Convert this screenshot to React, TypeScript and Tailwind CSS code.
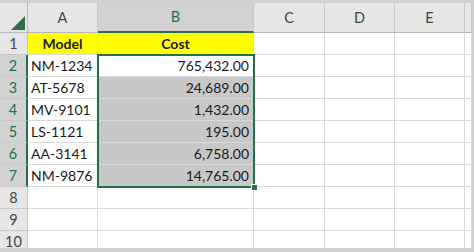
import React from "react";

const rows: { n: number; a: string; b: string }[] = [
  { n: 2, a: "NM-1234", b: "765,432.00" },
  { n: 3, a: "AT-5678", b: "24,689.00" },
  { n: 4, a: "MV-9101", b: "1,432.00" },
  { n: 5, a: "LS-1121", b: "195.00" },
  { n: 6, a: "AA-3141", b: "6,758.00" },
  { n: 7, a: "NM-9876", b: "14,765.00" },
];

const cell = "border-r border-b border-[#dadada] h-[22px] flex items-center";
const hdr = "border-r border-b border-[#c8c8c8] bg-[#e6e6e6] text-[#444] flex items-center justify-center text-[14.5px]";

export default function App() {
  return (
    <div
      className="relative w-[474px] h-[252px] overflow-hidden bg-white border-t-[3px] border-b-[4px] border-r-[2px] border-[#d0d0d0] text-[14px] text-[#1a1a1a]"
      style={{ fontFamily: "Lato, 'Open Sans', sans-serif" }}
    >
      <div className="grid grid-cols-[28px_70px_156px_71px_70px_70px_1fr]">
        {/* header row */}
        <div className="h-[30px] border-r border-b border-[#b8b8b8] bg-[#e6e6e6] relative">
          <svg className="absolute right-[2px] bottom-[2px]" width="14" height="14" viewBox="0 0 14 14">
            <polygon points="14,0 14,14 0,14" fill="#2f6f47" />
          </svg>
        </div>
        <div className={`${hdr} h-[30px] border-b-[#b8b8b8]`}>A</div>
        <div className="h-[30px] border-r border-[#c8c8c8] border-b-2 border-b-[#217346] bg-[#d2d2d2] text-[#217346] text-[14.5px] flex items-center justify-center">
          B
        </div>
        <div className={`${hdr} h-[30px] border-b-[#b8b8b8]`}>C</div>
        <div className={`${hdr} h-[30px] border-b-[#b8b8b8]`}>D</div>
        <div className={`${hdr} h-[30px] border-b-[#b8b8b8]`}>E</div>
        <div className={`${hdr} h-[30px] border-b-[#b8b8b8]`}></div>

        {/* row 1 */}
        <div className={`${hdr} h-[22px]`}>1</div>
        <div className={`${cell} justify-center bg-[#ffff00] font-bold`}>Model</div>
        <div className={`${cell} justify-center bg-[#ffff00] font-bold`}>Cost</div>
        <div className={cell}></div>
        <div className={cell}></div>
        <div className={cell}></div>
        <div className={cell}></div>

        {rows.map((r, i) => (
          <React.Fragment key={r.n}>
            <div className="h-[22px] border-r-2 border-r-[#217346] border-b border-[#c8c8c8] bg-[#d2d2d2] text-[#217346] text-[14.5px] flex items-center justify-center">
              {r.n}
            </div>
            <div className={`${cell} pl-[3px]`}>{r.a}</div>
            <div className={`${cell} justify-end pr-[4px] ${i === 0 ? "bg-white" : "bg-[#c8c8c8]"}`}>{r.b}</div>
            <div className={cell}></div>
            <div className={cell}></div>
            <div className={cell}></div>
            <div className={cell}></div>
          </React.Fragment>
        ))}

        {[8, 9, 10].map((n) => (
          <React.Fragment key={n}>
            <div className={`${hdr} h-[22px]`}>{n}</div>
            <div className={cell}></div>
            <div className={cell}></div>
            <div className={cell}></div>
            <div className={cell}></div>
            <div className={cell}></div>
            <div className={cell}></div>
          </React.Fragment>
        ))}
      </div>

      {/* selection outline */}
      <div className="absolute left-[97px] top-[51px] w-[158px] h-[134px] border-2 border-[#217346] pointer-events-none" />
      <div className="absolute left-[251px] top-[181px] w-[7px] h-[7px] bg-[#217346] border border-white" />
    </div>
  );
}
